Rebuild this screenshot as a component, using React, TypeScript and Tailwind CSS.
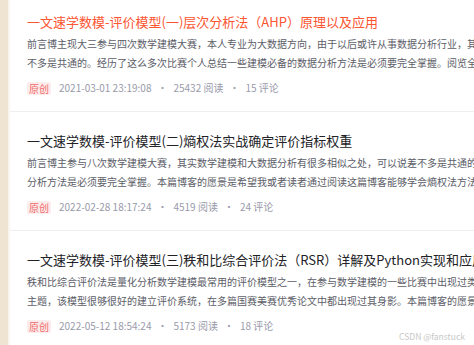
import React from "react";

type Item = {
  title: string;
  active?: boolean;
  lines: [string, string];
  date: string;
  views: string;
  comments: string;
};

const items: Item[] = [
  {
    title: "一文速学数模-评价模型(一)层次分析法（AHP）原理以及应用",
    active: true,
    lines: [
      "前言博主现大三参与四次数学建模大赛，本人专业为大数据方向，由于以后或许从事数据分析行业，其实数学建模和大数据分析有很多相似之处",
      "不多是共通的。经历了这么多次比赛个人总结一些建模必备的数据分析方法是必须要完全掌握。阅览全文可以学会层次分析法的原理",
    ],
    date: "2021-03-01 23:19:08",
    views: "25432",
    comments: "15",
  },
  {
    title: "一文速学数模-评价模型(二)熵权法实战确定评价指标权重",
    lines: [
      "前言博主参与八次数学建模大赛，其实数学建模和大数据分析有很多相似之处，可以说差不多是共通的。经历了这么多次比赛",
      "分析方法是必须要完全掌握。本篇博客的愿景是希望我或者读者通过阅读这篇博客能够学会熵权法方法的原理以及应用",
    ],
    date: "2022-02-28 18:17:24",
    views: "4519",
    comments: "24",
  },
  {
    title: "一文速学数模-评价模型(三)秩和比综合评价法（RSR）详解及Python实现和应用",
    lines: [
      "秩和比综合评价法是量化分析数学建模最常用的评价模型之一，在参与数学建模的一些比赛中出现过类似的题目",
      "主题，该模型很够很好的建立评价系统，在多篇国赛美赛优秀论文中都出现过其身影。本篇博客的愿景是希望读者能够学会",
    ],
    date: "2022-05-12 18:54:24",
    views: "5173",
    comments: "18",
  },
];

const font = { fontFamily: '"Noto Sans CJK SC", "Noto Sans", sans-serif' };

function Article({ item }: { item: Item }) {
  return (
    <div className="border-b border-[#efefef] pl-[17px] pt-[19px] pb-[16px]">
      <div
        className={`whitespace-nowrap text-[13px] leading-[20px] ${
          item.active ? "text-[#fc5531]" : "text-[#222226]"
        }`}
      >
        {item.title}
      </div>
      <div className="mt-[2px] text-[10px] leading-[19px] text-[#5c5d68]">
        <div className="whitespace-nowrap">{item.lines[0]}</div>
        <div className="whitespace-nowrap">{item.lines[1]}</div>
      </div>
      <div className="mt-[9px] flex items-center whitespace-nowrap text-[10px] leading-[14px] text-[#999aaa]">
        <span className="mr-[8px] rounded-[2px] bg-[#fdecec] px-[2px] leading-[13px] text-[#f06a6a]">
          原创
        </span>
        <span>{item.date}</span>
        <span className="mx-[6px]">·</span>
        <span>{item.views} 阅读</span>
        <span className="mx-[6px]">·</span>
        <span>{item.comments} 评论</span>
      </div>
    </div>
  );
}

export default function App() {
  return (
    <div
      className="relative flex h-[345px] w-[474px] overflow-hidden bg-white"
      style={font}
    >
      <div className="w-[8px] shrink-0 bg-[#efe4d2]" />
      <div className="w-[2px] shrink-0 bg-[#f8f4ee]" />
      <div className="mt-[-7px] min-w-0 flex-1 overflow-hidden">
        {items.map((it, i) => (
          <Article key={i} item={it} />
        ))}
      </div>
      <div className="absolute bottom-[3px] right-[9px] text-[8.5px] leading-[12px] text-[#c8c8c8]">
        CSDN @fanstuck
      </div>
    </div>
  );
}
